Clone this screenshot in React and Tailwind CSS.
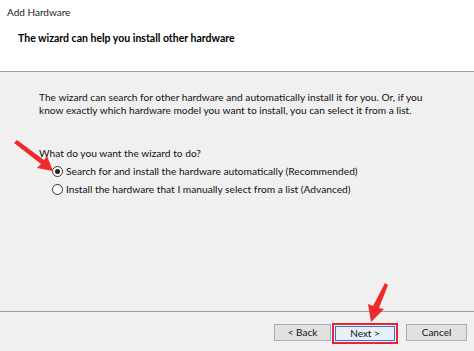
import React from "react";

function Radio({ checked }) {
  return (
    <span className="relative inline-flex h-[11px] w-[11px] shrink-0 items-center justify-center rounded-full border border-[#333] bg-white">
      {checked && <span className="h-[5px] w-[5px] rounded-full bg-[#222]" />}
    </span>
  );
}

export default function App() {
  return (
    <div
      className="relative h-[351px] w-[474px] overflow-hidden bg-[#f0f0f0] text-[10px] text-[#111]"
      style={{ fontFamily: 'Lato, "Noto Sans", sans-serif' }}
    >
      <div className="h-[72px] border-b border-[#a0a0a0] bg-white">
        <div className="pl-[7px] pt-[5px] text-[10px] leading-[15px] text-[#222]">Add Hardware</div>
        <div className="pl-[18px] pt-[11px] text-[10.5px] font-bold leading-[15px] text-black">
          The wizard can help you install other hardware
        </div>
      </div>
      <div className="h-[240px] whitespace-nowrap border-b border-[#a0a0a0] pl-[39px] pt-[19px] text-[10.2px]">
        <p className="leading-[13px]">
          The wizard can search for other hardware and automatically install it for you. Or, if you
          <br />
          know exactly which hardware model you want to install, you can select it from a list.
        </p>
        <p className="mt-[30px] leading-[13px]">What do you want the wizard to do?</p>
        <div className="mt-[5px] flex flex-col gap-[5px] pl-[13px]">
          <label className="flex items-center gap-[3px] leading-[13px]">
            <Radio checked />
            <span>Search for and install the hardware automatically (Recommended)</span>
          </label>
          <label className="flex items-center gap-[3px] leading-[13px]">
            <Radio />
            <span>Install the hardware that I manually select from a list (Advanced)</span>
          </label>
        </div>
      </div>
      <div className="flex items-start pl-[274px] pt-[12px]">
        <button className="h-[17px] w-[57px] border border-[#adadad] bg-[#e1e1e1] text-[10px] leading-[15px] text-[#111]">
          &lt; Back
        </button>
        <div className="-mt-[1px] ml-[1px] border-2 border-[#e8262c] p-[1px]">
          <button className="block h-[15px] w-[60px] border border-[#3c6fd8] bg-[#e5f1fb] text-[10px] leading-[13px] text-[#111]">
            Next &gt;
          </button>
        </div>
        <button className="ml-[8px] h-[17px] w-[61px] border border-[#adadad] bg-[#e1e1e1] text-[10px] leading-[15px] text-[#111]">
          Cancel
        </button>
      </div>
      <svg className="pointer-events-none absolute left-0 top-0" width="474" height="351" viewBox="0 0 474 351">
        <polygon points="14,143 17,140 44,160 47,156 53,171 37,168 41,164" fill="#ee2a2a" />
        <polygon points="385,283 388,285 379,308 384,309 371,322 368,304 373,306" fill="#ee2a2a" />
      </svg>
    </div>
  );
}
